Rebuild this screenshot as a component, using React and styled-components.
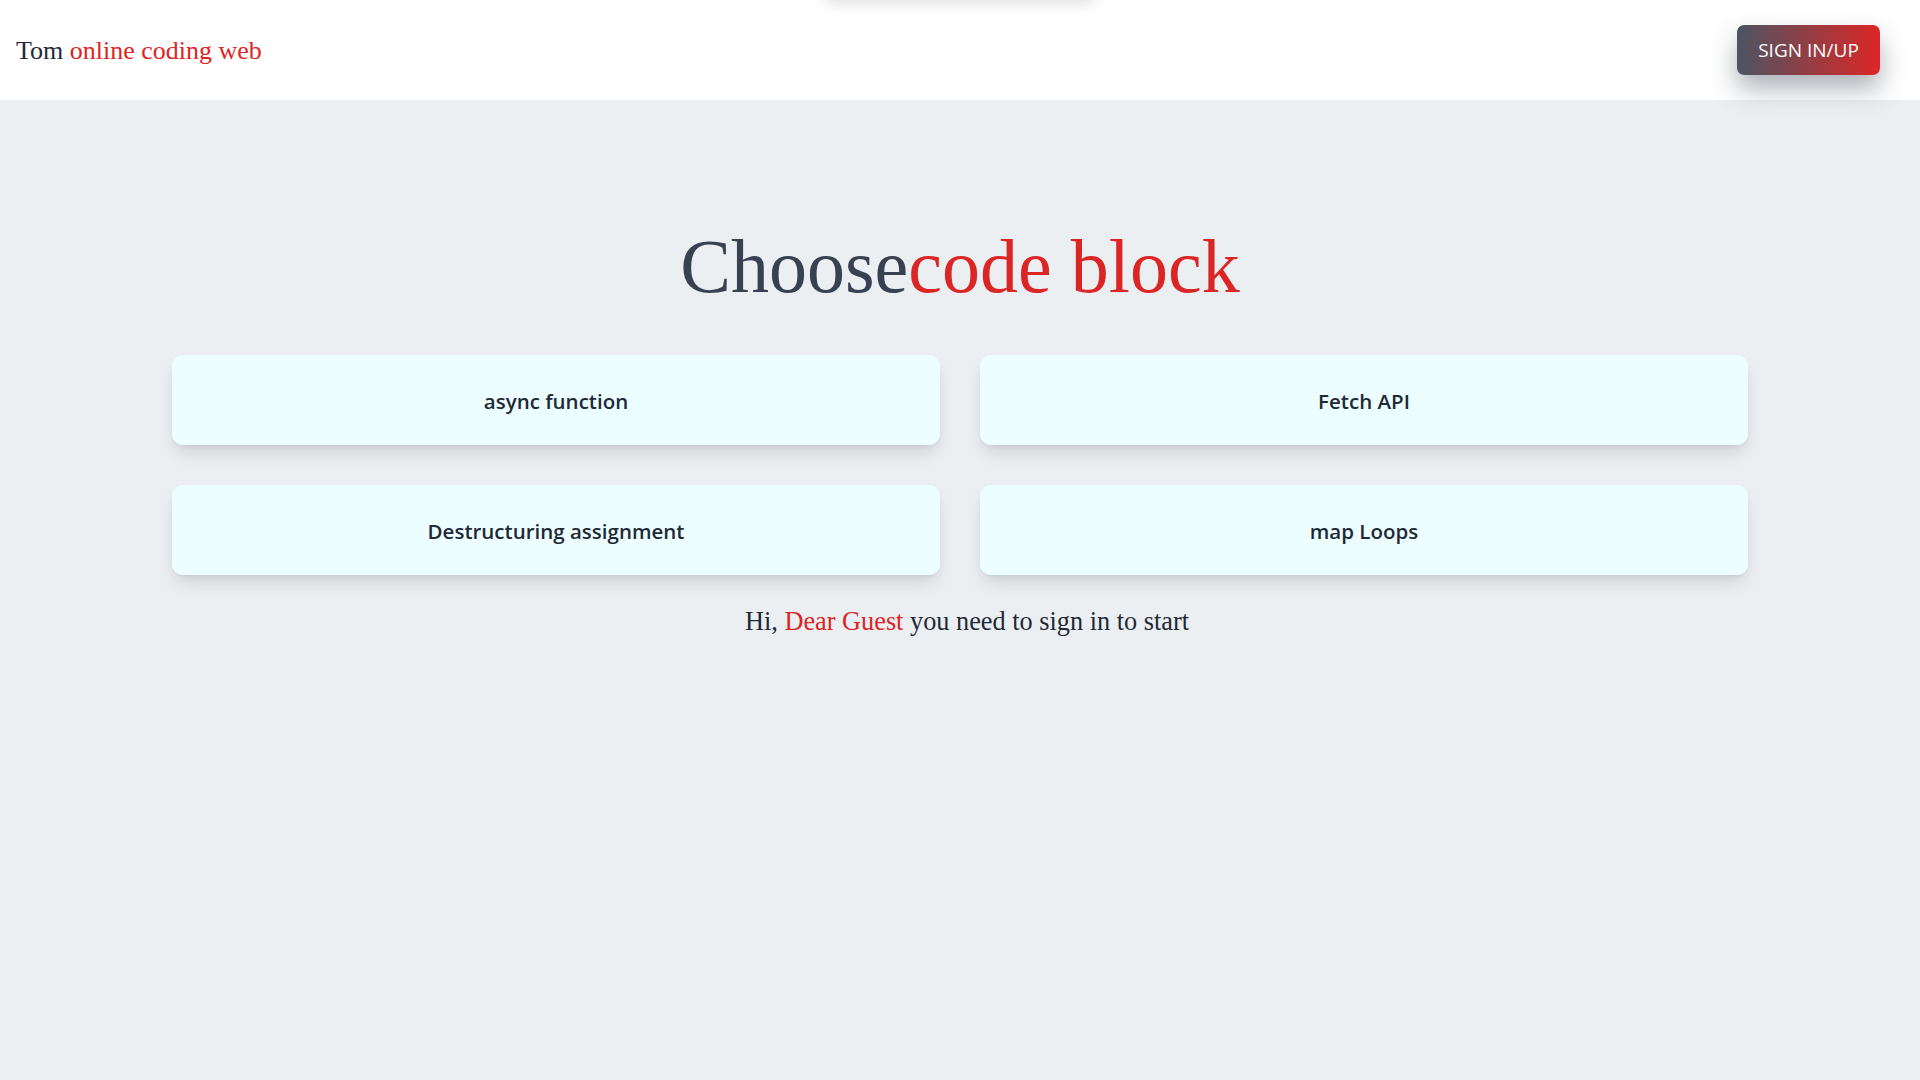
import styled, { createGlobalStyle } from "styled-components"

const GlobalStyle = createGlobalStyle`
    * {
        box-sizing: border-box;
    }
    body {
        margin: 0;
        background-color: #ebeff2;
        font-family: "Liberation Serif", "Times New Roman", serif;
    }
`

const Page = styled.div`
    min-height: 100vh;
    display: flex;
    flex-direction: column;
`
const Toast = styled.div`
    position: fixed;
    top: -52px;
    left: 50%;
    transform: translateX(-50%);
    width: 270px;
    height: 52px;
    border-radius: 8px;
    background: #fff;
    box-shadow: 0 4px 14px rgba(0, 0, 0, 0.12);
`
const Header = styled.header`
    height: 100px;
    background-color: #ffffff;
    display: flex;
    align-items: center;
    justify-content: space-between;
    padding: 0 40px 0 16px;
`
const Logo = styled.div`
    font-size: 26px;
    color: #1f2937;
    padding-top: 2px;
`
const Red = styled.span`
    color: #dc2626;
`
const SignButton = styled.button`
    width: 143px;
    height: 50px;
    border: none;
    border-radius: 7px;
    color: #fff;
    font-family: "Open Sans", sans-serif;
    font-size: 19px;
    background: linear-gradient(to right, #4b5563, #dc2626);
    box-shadow: 0 14px 26px rgba(75, 85, 99, 0.45);
    cursor: pointer;
`
const Main = styled.main`
    display: flex;
    flex-direction: column;
    align-items: center;
`
const Title = styled.h1`
    margin: 122px 0 0;
    font-size: 76px;
    font-weight: 400;
    line-height: 88px;
    color: #374151;
`
const Grid = styled.div`
    width: 1576px;
    margin-top: 45px;
    display: grid;
    grid-template-columns: 1fr 1fr;
    gap: 40px;
`
const Card = styled.div`
    height: 90px;
    padding-top: 2px;
    border-radius: 11px;
    background-color: #ecfeff;
    display: flex;
    align-items: center;
    justify-content: center;
    font-family: "Open Sans", sans-serif;
    font-weight: 600;
    font-size: 20.5px;
    color: #1f2937;
    box-shadow: 0 10px 18px -3px rgba(0, 0, 0, 0.12), 0 4px 6px -4px rgba(0, 0, 0, 0.1);
    cursor: pointer;
`
const Message = styled.p`
    margin: 32px 0 0;
    padding-left: 14px;
    font-size: 26.3px;
    color: #1f2937;
`

const blocks = ["async function", "Fetch API", "Destructuring assignment", "map Loops"]

function App() {
    return (
        <Page>
            <GlobalStyle />
            <Toast />
            <Header>
                <Logo>
                    Tom <Red>online coding web</Red>
                </Logo>
                <SignButton>SIGN IN/UP</SignButton>
            </Header>
            <Main>
                <Title>
                    Choose<Red>code block</Red>
                </Title>
                <Grid>
                    {blocks.map((b) => (
                        <Card key={b}>{b}</Card>
                    ))}
                </Grid>
                <Message>
                    Hi, <Red>Dear Guest</Red> you need to sign in to start
                </Message>
            </Main>
        </Page>
    )
}

export default App
